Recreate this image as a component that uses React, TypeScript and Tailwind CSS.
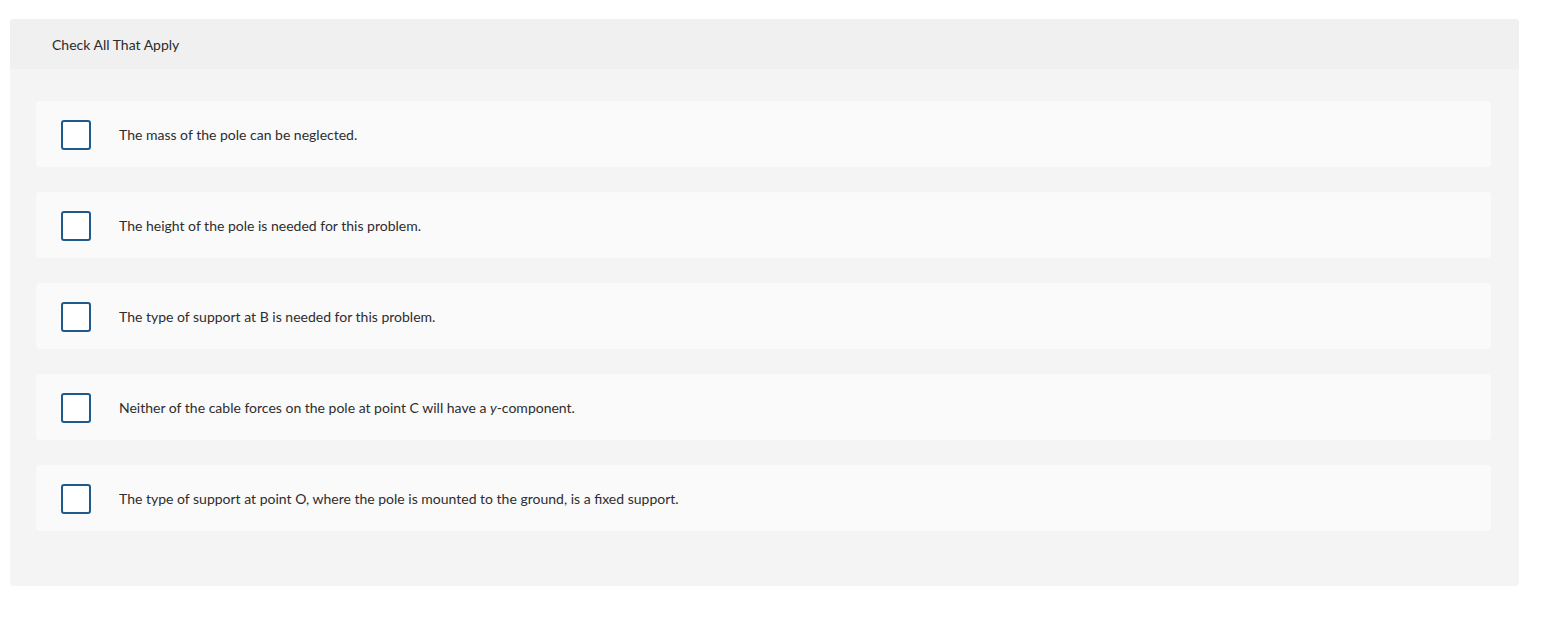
const options = [
  <>The mass of the pole can be neglected.</>,
  <>The height of the pole is needed for this problem.</>,
  <>The type of support at B is needed for this problem.</>,
  <>
    Neither of the cable forces on the pole at point C will have a <i>y</i>-component.
  </>,
  <>The type of support at point O, where the pole is mounted to the ground, is a fixed support.</>,
];

const App = () => {
  return (
    <div className="bg-white pt-[19px] pl-[10px] h-[622px]" style={{ fontFamily: "Lato, 'Open Sans', sans-serif" }}>
      <div className="w-[1509px] rounded-sm bg-[#f4f4f4] overflow-hidden">
        <div className="h-[50px] bg-[#f0f0f0] flex items-center pl-[42px] pt-[1px] text-[14px] text-[#2a2a2a]">
          Check All That Apply
        </div>
        <div className="flex flex-col gap-[25px] pt-[32px] pb-[55px] pl-[26px] pr-[28px]">
          {options.map((text, i) => (
            <label
              key={i}
              className="h-[66px] bg-[#fafafa] rounded-[4px] flex items-center pl-[25px] cursor-pointer"
            >
              <span className="w-[30px] h-[30px] mt-[2px] shrink-0 rounded-[3px] border-2 border-[#205a8d] bg-white" />
              <span className="ml-[28px] mt-[1px] text-[14px] text-[#2d2d2d]">{text}</span>
            </label>
          ))}
        </div>
      </div>
    </div>
  );
};

export default App;
